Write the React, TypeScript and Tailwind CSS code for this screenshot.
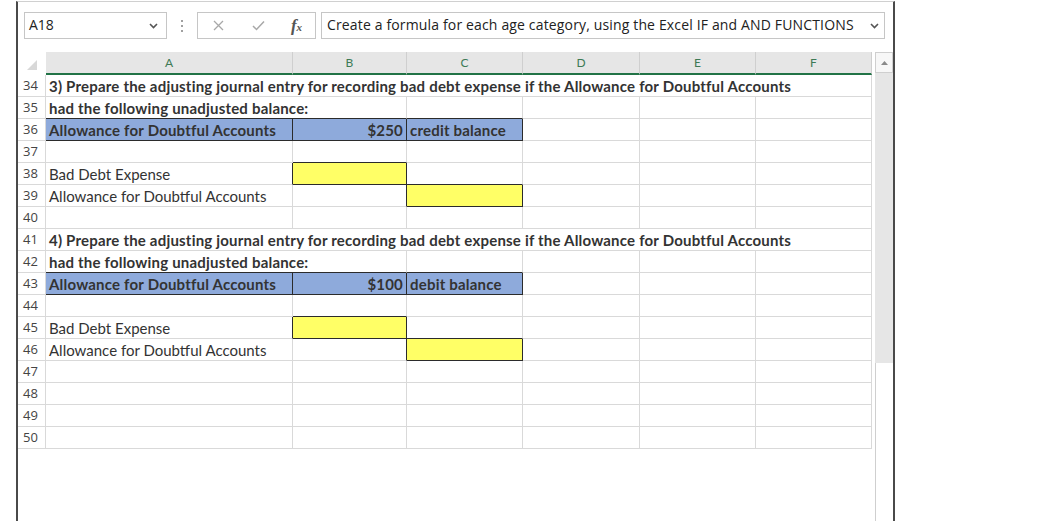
import React from "react";

type Cell = { t?: string; span?: number; cls?: string };

const blue = "bg-[#8eaadb] text-[#1c2940] font-bold tracking-[0.2px]";
const yellow = "bg-[#ffff66]";
const boldTxt = "font-bold text-[#111] tracking-[0.2px]";

const emptyRest = (n: number): Cell[] => Array.from({ length: n }, () => ({}));

const rows: { n: number; cells: Cell[] }[] = [
  {
    n: 34,
    cells: [
      {
        t: "3) Prepare the adjusting journal entry for recording bad debt expense if the Allowance for Doubtful Accounts",
        span: 6,
        cls: boldTxt,
      },
    ],
  },
  {
    n: 35,
    cells: [
      { t: "had the following unadjusted balance:", span: 2, cls: `${boldTxt} border-b-[#2b2b2b]` },
      { cls: "border-b-[#2b2b2b]" },
      ...emptyRest(3),
    ],
  },
  {
    n: 36,
    cells: [
      { t: "Allowance for Doubtful Accounts", cls: `${blue} border-r-[#2b2b2b] border-b-[#2b2b2b]` },
      { t: "$250", cls: `${blue} justify-end border-r-[#2b2b2b] border-b-[#2b2b2b]` },
      { t: "credit balance", cls: `${blue} border-r-[#2b2b2b] border-b-[#2b2b2b]` },
      ...emptyRest(3),
    ],
  },
  { n: 37, cells: [{}, { cls: "border-b-[#2b2b2b]" }, ...emptyRest(4)] },
  {
    n: 38,
    cells: [
      { t: "Bad Debt Expense", cls: "border-r-[#2b2b2b]" },
      { cls: `${yellow} border-r-[#2b2b2b] border-b-[#2b2b2b]` },
      { cls: "border-b-[#2b2b2b]" },
      ...emptyRest(3),
    ],
  },
  {
    n: 39,
    cells: [
      { t: "Allowance for Doubtful Accounts" },
      { cls: "border-r-[#2b2b2b]" },
      { cls: `${yellow} border-r-[#2b2b2b] border-b-[#2b2b2b]` },
      ...emptyRest(3),
    ],
  },
  { n: 40, cells: emptyRest(6) },
  {
    n: 41,
    cells: [
      {
        t: "4) Prepare the adjusting journal entry for recording bad debt expense if the Allowance for Doubtful Accounts",
        span: 6,
        cls: boldTxt,
      },
    ],
  },
  {
    n: 42,
    cells: [
      { t: "had the following unadjusted balance:", span: 2, cls: `${boldTxt} border-b-[#2b2b2b]` },
      { cls: "border-b-[#2b2b2b]" },
      ...emptyRest(3),
    ],
  },
  {
    n: 43,
    cells: [
      { t: "Allowance for Doubtful Accounts", cls: `${blue} border-r-[#2b2b2b] border-b-[#2b2b2b]` },
      { t: "$100", cls: `${blue} justify-end border-r-[#2b2b2b] border-b-[#2b2b2b]` },
      { t: "debit balance", cls: `${blue} border-r-[#2b2b2b] border-b-[#2b2b2b]` },
      ...emptyRest(3),
    ],
  },
  { n: 44, cells: [{}, { cls: "border-b-[#2b2b2b]" }, ...emptyRest(4)] },
  {
    n: 45,
    cells: [
      { t: "Bad Debt Expense", cls: "border-r-[#2b2b2b]" },
      { cls: `${yellow} border-r-[#2b2b2b] border-b-[#2b2b2b]` },
      { cls: "border-b-[#2b2b2b]" },
      ...emptyRest(3),
    ],
  },
  {
    n: 46,
    cells: [
      { t: "Allowance for Doubtful Accounts" },
      { cls: "border-r-[#2b2b2b]" },
      { cls: `${yellow} border-r-[#2b2b2b] border-b-[#2b2b2b]` },
      ...emptyRest(3),
    ],
  },
  { n: 47, cells: emptyRest(6) },
  { n: 48, cells: emptyRest(6) },
  { n: 49, cells: emptyRest(6) },
  { n: 50, cells: emptyRest(6) },
];

const spanCls: Record<number, string> = {
  1: "col-span-1",
  2: "col-span-2",
  6: "col-span-6",
};

function Chevron() {
  return (
    <svg width="9" height="6" viewBox="0 0 9 6">
      <path d="M1 1 L4.5 4.5 L8 1" fill="none" stroke="#555" strokeWidth="1.6" />
    </svg>
  );
}

export default function App() {
  return (
    <div className="w-[1050px] h-[521px] bg-white overflow-hidden">
      <div className="ml-[16px] mt-px w-[879px] h-[520px] border-l-2 border-r-2 border-[#4a4a4a] border-t border-t-[#d0d0d0] flex flex-col">
        {/* formula bar */}
        <div className="flex items-center pl-[6px] mt-[10px] h-[27px]">
          <div className="w-[143px] h-[27px] border border-[#c6c6c6] flex items-center justify-between pl-[4px] pr-[8px]">
            <span
              className="text-[14px] text-[#222] leading-none pb-[2px]"
              style={{ fontFamily: '"Open Sans", "Noto Sans", sans-serif' }}
            >
              A18
            </span>
            <Chevron />
          </div>
          <div className="w-[30px] flex flex-col items-center justify-center gap-[3px]">
            <span className="w-[2px] h-[2px] bg-[#a0a0a0]" />
            <span className="w-[2px] h-[2px] bg-[#a0a0a0]" />
            <span className="w-[2px] h-[2px] bg-[#a0a0a0]" />
          </div>
          <div className="w-[119px] h-[27px] border border-[#c6c6c6] flex items-center">
            <span className="w-[40px] flex justify-center">
              <svg width="11" height="11" viewBox="0 0 11 11">
                <path d="M1 1 L10 10 M10 1 L1 10" stroke="#a8a8a8" strokeWidth="1.3" />
              </svg>
            </span>
            <span className="w-[40px] flex justify-center">
              <svg width="13" height="11" viewBox="0 0 13 11">
                <path d="M1 6 L4.5 9.5 L12 1.5" fill="none" stroke="#a8a8a8" strokeWidth="1.5" />
              </svg>
            </span>
            <span
              className="w-[37px] flex justify-center items-baseline italic font-bold text-[17px] text-[#555] leading-none"
              style={{ fontFamily: '"Liberation Serif", serif' }}
            >
              f<span className="text-[11px] font-bold">x</span>
            </span>
          </div>
          <div className="ml-[5px] w-[564px] h-[27px] border border-[#c6c6c6] flex items-center justify-between pl-[5px] pr-[5px]">
            <span
              className="text-[14px] text-[#222] tracking-[0.15px] leading-none pb-[2px]"
              style={{ fontFamily: '"Open Sans", "Noto Sans", sans-serif' }}
            >
              Create a formula for each age category, using the Excel IF and AND FUNCTIONS
            </span>
            <Chevron />
          </div>
        </div>

        {/* sheet */}
        <div className="flex mt-[13px] flex-1 min-h-0">
          <div className="w-[854px]">
            {/* column header */}
            <div className="grid grid-cols-[28px_247px_114px_116px_117px_116px_116px]">
              <div className="h-[23px] flex items-end justify-end pr-[9px] pb-[5px]">
                <svg width="10" height="10" viewBox="0 0 10 10">
                  <path d="M10 0 L10 10 L0 10 Z" fill="#d8d8d8" />
                </svg>
              </div>
              {["A", "B", "C", "D", "E", "F"].map((c) => (
                <div
                  key={c}
                  className="h-[23px] bg-[#e6e6e6] border-r border-r-[#cfcfcf] border-b-2 border-b-[#217346] flex items-center justify-center text-[12px] text-[#3d7a55]"
                  style={{ fontFamily: 'Lato, "Open Sans", sans-serif' }}
                >
                  {c}
                </div>
              ))}
            </div>
            {/* rows */}
            <div
              className="grid grid-cols-[28px_247px_114px_116px_117px_116px_116px]"
              style={{ fontFamily: 'Lato, "Open Sans", sans-serif' }}
            >
              {rows.map((r) => (
                <React.Fragment key={r.n}>
                  <div
                    className="h-[22px] border-b border-r border-[#d9d9d9] flex items-center pl-[5px] text-[13px] text-[#444]"
                    style={{ fontFamily: '"Open Sans", "Noto Sans", sans-serif' }}
                  >
                    {r.n}
                  </div>
                  {r.cells.map((c, i) => (
                    <div
                      key={i}
                      className={`h-[22px] border-b border-r border-[#d9d9d9] flex items-center px-[3px] pt-[2px] whitespace-nowrap overflow-visible text-[15px] text-[#333] ${
                        spanCls[c.span ?? 1]
                      } ${c.cls ?? ""}`}
                    >
                      {c.t}
                    </div>
                  ))}
                </React.Fragment>
              ))}
            </div>
          </div>
          {/* scrollbar */}
          <div className="ml-[3px] w-[18px] flex flex-col">
            <div className="h-[21px] border border-[#cfcfcf] bg-[#f7f7f7] flex items-center justify-center">
              <svg width="7" height="4" viewBox="0 0 7 4">
                <path d="M0 4 L3.5 0 L7 4 Z" fill="#8a8a8a" />
              </svg>
            </div>
            <div className="h-[290px] bg-[#e6e6e6]" />
            <div className="flex-1 border-l border-[#cfcfcf] bg-white" />
          </div>
        </div>
      </div>
    </div>
  );
}
